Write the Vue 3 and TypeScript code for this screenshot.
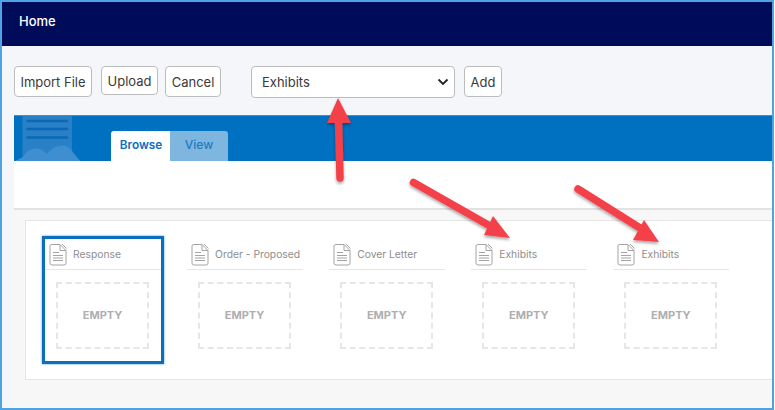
<script setup lang="ts">
const docs: { name: string; active?: boolean }[] = [
  { name: 'Response', active: true },
  { name: 'Order - Proposed' },
  { name: 'Cover Letter' },
  { name: 'Exhibits' },
  { name: 'Exhibits' },
]
const arrows = [
  { line: 'M340 178 L338.500 120', head: '338,98 351,123 327,123' },
  { line: 'M413.500 182.500 L490 226', head: '510,238 484,235 493,216' },
  { line: 'M578 189 L640 228', head: '659,242 633,240 644,220' },
]
</script>

<template>
  <div class="frame">
    <header class="topbar">Home</header>
    <div class="toolbar">
      <button class="btn import">Import File</button>
      <button class="btn upload">Upload</button>
      <button class="btn cancel">Cancel</button>
      <div class="select">
        <span>Exhibits</span>
        <svg width="12" height="8" viewBox="0 0 12 8"><path d="M1.500 1.500 L6 6 L10.500 1.500" fill="none" stroke="#222" stroke-width="1.800" /></svg>
      </div>
      <button class="btn add">Add</button>
    </div>
    <div class="content">
      <div class="band">
        <svg class="logo" width="70" height="46" viewBox="0 0 70 46">
          <path d="M8.500 0 H58 V46 H8.500 Z" fill="#2a80c6" />
          <path d="M12.500 5 H54 M12.500 13 H54 M12.500 21.500 H54" stroke="#0a68b4" stroke-width="2.500" />
          <path d="M1 45 L9 41 C13 33 24 28 33 38 C40 29 52 26 58 35 L67 46 H1 Z" fill="#3f8ed0" />
        </svg>
        <div class="tabs">
          <div class="tab on">Browse</div>
          <div class="tab">View</div>
        </div>
      </div>
      <div class="spacer"></div>
      <div class="well">
        <div class="panel">
          <div v-for="(d, i) in docs" :key="i" class="card" :class="{ active: d.active }">
            <div class="title">
              <svg width="18" height="23" viewBox="0 0 18 23" fill="none" stroke="#a4a4a4">
                <path d="M1 3 Q1 1.500 3 1.500 H11 L17 7.500 V20 Q17 22 15 22 H3 Q1 22 1 20 Z" fill="#fff" />
                <path d="M11 1.500 V7.500 H17 M13 1 L17.500 5.500" />
                <path d="M4 9.500 H10 M4 12.500 H14 M4 15 H14 M4 17.500 H14" stroke-width="1.200" />
              </svg>
              <span>{{ d.name }}</span>
            </div>
            <div class="empty">EMPTY</div>
          </div>
        </div>
      </div>
    </div>
    <svg class="arrows" width="775" height="410" viewBox="0 0 775 410">
      <defs>
        <filter id="sh" x="-20%" y="-20%" width="140%" height="140%">
          <feDropShadow dx="0" dy="2" stdDeviation="1.800" flood-color="#000" flood-opacity="0.350" />
        </filter>
      </defs>
      <g v-for="(a, i) in arrows" :key="i" filter="url(#sh)">
        <path :d="a.line" stroke="#f44149" stroke-width="7.500" stroke-linecap="round" fill="none" />
        <polygon :points="a.head" fill="#f44149" />
      </g>
    </svg>
  </div>
</template>

<style>
html, body { margin: 0; background: #fff; }
</style>

<style scoped>
.frame {
  position: relative;
  width: 774px;
  height: 410px;
  box-sizing: border-box;
  border: 2px solid #4fa3e3;
  background: #f5f6fa;
  overflow: hidden;
  font-family: Inter, "Liberation Sans", sans-serif;
  display: flex;
  flex-direction: column;
}
.topbar {
  height: 44px;
  flex: none;
  background: #000c5a;
  color: #fff;
  font-size: 13px;
  font-weight: 500;
  line-height: 38px;
  padding-left: 17px;
  box-sizing: border-box;
}
.toolbar {
  height: 69px;
  flex: none;
  display: flex;
  align-items: flex-start;
  padding: 20px 0 0 12px;
  box-sizing: border-box;
}
.btn {
  height: 31px;
  box-sizing: border-box;
  border: 1px solid #bcbcbc;
  border-radius: 4px;
  background: #fff;
  color: #3a3a3a;
  font: 400 13px Inter, "Liberation Sans", sans-serif;
  padding: 0;
}
.import { width: 78px; margin-right: 9px; }
.upload { width: 57px; height: 29px; margin-right: 7px; }
.cancel { width: 56px; margin-right: 30px; }
.select {
  width: 204px;
  height: 32px;
  box-sizing: border-box;
  border: 1px solid #bcbcbc;
  border-radius: 4px;
  background: #fff;
  color: #3a3a3a;
  font-size: 13px;
  display: flex;
  align-items: center;
  justify-content: space-between;
  padding: 0 5px 0 10px;
  margin-right: 9px;
}
.add { width: 38px; }
.content {
  flex: 1;
  margin-left: 12px;
  background: #fff;
  display: flex;
  flex-direction: column;
}
.band {
  position: relative;
  height: 46px;
  flex: none;
  background: #0070c0;
  border-top: 1px solid #3c8fd0;
  box-sizing: border-box;
  display: flex;
  align-items: flex-end;
  padding-left: 97px;
  overflow: hidden;
}
.logo { position: absolute; left: 0; top: 0; }
.tabs { display: flex; position: relative; }
.tab {
  width: 58px;
  height: 30px;
  box-sizing: border-box;
  background: #7fb6df;
  color: #1a7cc4;
  font-size: 12px;
  font-weight: 500;
  line-height: 28px;
  text-align: center;
  border-radius: 0 3px 0 0;
}
.tab.on {
  width: 59px;
  padding-left: 1px;
  background: #fff;
  font-size: 11.800px;
  font-weight: 600;
  color: #0b6fbd;
  border-radius: 3px 0 0 0;
}
.spacer { height: 47px; flex: none; background: #fff; }
.well {
  flex: 1;
  background: #f7f7f7;
  border-top: 2px solid #e2e2e2;
  padding: 10px 0 28px 11px;
  box-sizing: border-box;
  display: flex;
}
.panel {
  flex: 1;
  background: #fff;
  border: 1px solid #e6e6e6;
  border-right: 0;
  padding: 15px 0 0 16px;
  display: flex;
  align-items: flex-start;
  gap: 20.100px;
}
.card {
  width: 122px;
  height: 128px;
  box-sizing: border-box;
  border: 3px solid transparent;
}
.card.active {
  border-color: #0a70bd;
  box-shadow: 0 0 2px #4a9ad8;
}
.title {
  height: 31px;
  box-sizing: border-box;
  border-bottom: 1px solid #e6e6e6;
  display: flex;
  align-items: center;
  gap: 6px;
  padding-left: 4px;
  color: #8e8e8e;
  font-size: 10.300px;
  white-space: nowrap;
}
.empty {
  width: 93px;
  height: 67px;
  box-sizing: border-box;
  margin: 12px 0 0 11px;
  border: 2px dashed #e6e6e6;
  color: #aeaeae;
  font-size: 11px;
  font-weight: 700;
  padding-bottom: 2px;
  display: flex;
  align-items: center;
  justify-content: center;
}
.arrows { position: absolute; left: -2px; top: -2px; pointer-events: none; }
</style>
